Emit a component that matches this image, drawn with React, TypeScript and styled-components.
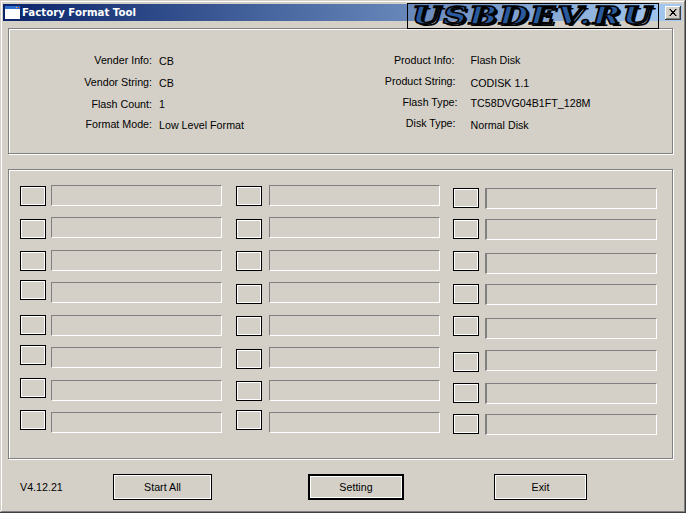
import React from 'react';

import styled, { createGlobalStyle } from 'styled-components';

const LEFT_INFO = {
  labels: [
    { text: 'Vender Info:', gap: 24, inset: 0 },
    { text: 'Vendor String:', gap: 8, inset: 0 },
    { text: 'Flash Count:', gap: 8, inset: 0 },
    { text: 'Format Mode:', gap: 6, inset: 0 },
  ],
  values: [
    { text: 'CB', gap: 25 },
    { text: 'CB', gap: 8 },
    { text: '1', gap: 7 },
    { text: 'Low Level Format', gap: 7 },
  ],
};

const RIGHT_INFO = {
  labels: [
    { text: 'Product Info:', gap: 24, inset: 3 },
    { text: 'Product String:', gap: 7, inset: 2 },
    { text: 'Flash Type:', gap: 7, inset: 0 },
    { text: 'Disk Type:', gap: 7, inset: 2 },
  ],
  values: [
    { text: 'Flash Disk', gap: 24 },
    { text: 'CODISK 1.1', gap: 9 },
    { text: 'TC58DVG04B1FT_128M', gap: 6 },
    { text: 'Normal Disk', gap: 8 },
  ],
};

const SLOT_COLUMNS = [
  {
    boxes: [186, 219, 251, 280, 315, 345, 378, 410],
    fields: [185, 217, 250, 282, 315, 347, 380, 412],
    gutter: 5,
    fieldWidth: 171,
    thick: false,
  },
  {
    boxes: [186, 219, 251, 284, 316, 349, 381, 410],
    fields: [185, 217, 250, 282, 315, 347, 380, 412],
    gutter: 7,
    fieldWidth: 171,
    thick: false,
  },
  {
    boxes: [188, 219, 251, 284, 316, 352, 383, 414],
    fields: [188, 219, 253, 284, 318, 350, 383, 414],
    gutter: 6,
    fieldWidth: 172,
    thick: true,
  },
];

const BOX_HEIGHT = 20;
const FIELD_HEIGHT = 21;
const GROUP_TOP = 170;

// the tops in the table are window coordinates, the stacks need the space above each item
const toGaps = (tops: number[], height: number) =>
  tops.map((top, i) => (i === 0 ? top - GROUP_TOP : top - tops[i - 1] - height));

function App() {
  return (
    <>
      <GlobalStyle />
      <Window>
        <TitleBar>
          <TitleIcon viewBox="0 0 15 13" aria-hidden="true">
            <rect width="15" height="13" fill="#ffffff" />
            <rect width="15" height="3" fill="#2f6fd0" />
            <rect x="11" y="1" width="1" height="1" fill="#f0c040" />
            <rect x="13" y="1" width="1" height="1" fill="#e05030" />
          </TitleIcon>
          <TitleText>Factory Format Tool</TitleText>
          <CloseButton aria-label="Close">
            <svg width="8" height="7" viewBox="0 0 8 7" aria-hidden="true">
              <path
                d="M0 0h2v1h1v1h2V1h1V0h2L6 2v1H5v1h1v1l2 2H6V6H5V5H3v1H2v1H0l2-2V4h1V3H2V2z"
                fill="#000000"
              />
            </svg>
          </CloseButton>
        </TitleBar>
        <Logo>
          <LogoText>USBDEV.RU</LogoText>
        </Logo>

        <InfoPanel>
          {[LEFT_INFO, RIGHT_INFO].map((info, i) => (
            <InfoBlock key={i}>
              <LabelStack $right={i === 1}>
                {info.labels.map((label) => (
                  <Label key={label.text} $gap={label.gap} $inset={label.inset}>
                    {label.text}
                  </Label>
                ))}
              </LabelStack>
              <ValueStack $right={i === 1}>
                {info.values.map((value, j) => (
                  <Value key={j} $gap={value.gap}>
                    {value.text}
                  </Value>
                ))}
              </ValueStack>
            </InfoBlock>
          ))}
        </InfoPanel>

        <SlotPanel>
          {SLOT_COLUMNS.map((column, i) => (
            <SlotColumn key={i} $gutter={column.gutter}>
              <SlotStack>
                {toGaps(column.boxes, BOX_HEIGHT).map((gap, j) => (
                  <SlotBox key={j} $gap={gap} />
                ))}
              </SlotStack>
              <SlotStack>
                {toGaps(column.fields, FIELD_HEIGHT).map((gap, j) => (
                  <SlotField
                    key={j}
                    $gap={gap}
                    $width={column.fieldWidth}
                    $thick={column.thick}
                  />
                ))}
              </SlotStack>
            </SlotColumn>
          ))}
        </SlotPanel>

        <Footer>
          <Version>V4.12.21</Version>
          <StartButton>Start All</StartButton>
          <SettingButton>Setting</SettingButton>
          <ExitButton>Exit</ExitButton>
        </Footer>
      </Window>
    </>
  );
}

export default App;

const GlobalStyle = createGlobalStyle`
  html,
  body {
    margin: 0;
    padding: 0;
    background: #d4d0c8;
  }
`;

const Window = styled.div`
  position: relative;
  box-sizing: border-box;
  width: 686px;
  height: 513px;
  padding: 4px 3px 0 3px;
  overflow: hidden;
  background: #d4d0c8;
  color: #000000;
  font-family: 'Liberation Sans', Arial, sans-serif;
  font-size: 10.7px;
  box-shadow:
    inset -1px -1px #404040,
    inset 1px 1px #d4d0c8,
    inset -2px -2px #808080,
    inset 2px 2px #ffffff;
`;

const TitleBar = styled.div`
  display: flex;
  align-items: center;
  width: 679px;
  height: 17px;
  padding: 0 1px 0 2px;
  box-sizing: border-box;
  background: linear-gradient(90deg, #0a246a 0%, #a6caf0 100%);
`;

const TitleIcon = styled.svg`
  width: 15px;
  height: 13px;
  margin-right: 2px;
  flex-shrink: 0;
`;

const TitleText = styled.div`
  flex: 1;
  color: #ffffff;
  font-family: 'DejaVu Sans', Verdana, sans-serif;
  font-size: 10.2px;
  font-weight: 700;
  line-height: 17px;
`;

const CloseButton = styled.button`
  display: flex;
  align-items: center;
  justify-content: center;
  box-sizing: border-box;
  width: 16px;
  height: 14px;
  padding: 0;
  border: none;
  background: #d4d0c8;
  box-shadow:
    inset -1px -1px #404040,
    inset 1px 1px #ffffff,
    inset -2px -2px #808080;
`;

const Logo = styled.div`
  position: absolute;
  top: 3px;
  left: 407px;
  box-sizing: border-box;
  display: flex;
  align-items: center;
  justify-content: center;
  width: 252px;
  height: 26px;
  border: 1px solid #000000;
`;

const LogoText = styled.span`
  display: inline-block;
  color: #2a5a9e;
  font-family: 'DejaVu Serif', 'Liberation Serif', serif;
  font-size: 25px;
  font-style: italic;
  font-weight: 700;
  letter-spacing: 1.5px;
  line-height: 24px;
  white-space: nowrap;
  transform: scaleX(1.33);
  -webkit-text-stroke: 1.4px #000000;
  text-shadow: 2px 2px 0 #000000;
`;

const Panel = styled.div`
  box-sizing: border-box;
  width: 665px;
  margin-left: 5px;
  border: 1px solid #808080;
  box-shadow:
    inset 1px 1px #ffffff,
    1px 1px #ffffff;
`;

const InfoPanel = styled(Panel)`
  display: flex;
  height: 126px;
  margin-top: 7px;
`;

const InfoBlock = styled.div`
  display: flex;
  width: 332px;
`;

const LabelStack = styled.div<{ $right: boolean }>`
  display: flex;
  flex-direction: column;
  align-items: flex-end;
  width: ${({ $right }) => ($right ? '117px' : '143px')};
`;

const ValueStack = styled.div<{ $right: boolean }>`
  display: flex;
  flex-direction: column;
  margin-left: ${({ $right }) => ($right ? '13px' : '7px')};
`;

const Label = styled.div<{ $gap: number; $inset: number }>`
  margin-top: ${({ $gap }) => $gap}px;
  margin-right: ${({ $inset }) => $inset}px;
  line-height: 14px;
  white-space: nowrap;
`;

const Value = styled.div<{ $gap: number }>`
  margin-top: ${({ $gap }) => $gap}px;
  line-height: 14px;
  white-space: nowrap;
`;

const SlotPanel = styled(Panel)`
  display: grid;
  grid-template-columns: 216px 217px 1fr;
  height: 290px;
  margin-top: 15px;
  padding-left: 11px;
`;

const SlotColumn = styled.div<{ $gutter: number }>`
  display: flex;
  column-gap: ${({ $gutter }) => $gutter}px;
`;

const SlotStack = styled.div`
  display: flex;
  flex-direction: column;
`;

const SlotBox = styled.div<{ $gap: number }>`
  box-sizing: border-box;
  width: 26px;
  height: ${BOX_HEIGHT}px;
  margin-top: ${({ $gap }) => $gap}px;
  border: 1px solid #000000;
  box-shadow: inset 0 0 0 1px #ffffff;
`;

const SlotField = styled.div<{ $gap: number; $width: number; $thick: boolean }>`
  box-sizing: border-box;
  width: ${({ $width }) => $width}px;
  height: ${FIELD_HEIGHT}px;
  margin-top: ${({ $gap }) => $gap}px;
  border-style: solid;
  border-width: 1px 1px 1px ${({ $thick }) => ($thick ? '2px' : '1px')};
  border-color: #808080 #ffffff #ffffff #808080;
`;

const Footer = styled.div`
  display: flex;
  align-items: center;
  height: 26px;
  margin-top: 15px;
  padding-left: 17px;
`;

const Version = styled.div`
  width: 93px;
  line-height: 14px;
`;

const FooterButton = styled.button`
  box-sizing: border-box;
  height: 26px;
  padding: 0;
  border: 1px solid #000000;
  background: #d4d0c8;
  color: #000000;
  font: inherit;
  box-shadow:
    inset 1px 1px #ffffff,
    inset -1px -1px #ffffff;
`;

const StartButton = styled(FooterButton)`
  width: 99px;
`;

const SettingButton = styled(FooterButton)`
  width: 96px;
  margin-left: 96px;
  border-width: 2px;
`;

const ExitButton = styled(FooterButton)`
  width: 93px;
  margin-left: 90px;
`;
